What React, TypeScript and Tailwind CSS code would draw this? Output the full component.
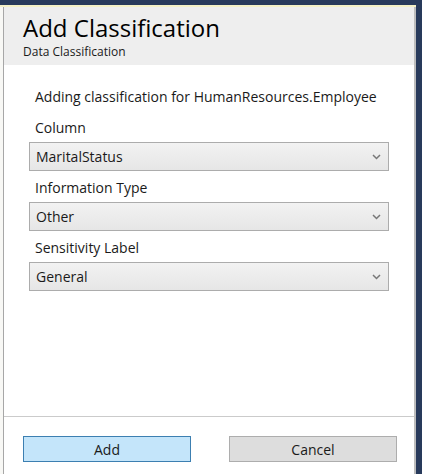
import React from "react";

const FONT = { fontFamily: '"Open Sans", "Noto Sans", sans-serif' };

function Chevron() {
  return (
    <svg width="9" height="6" viewBox="0 0 9 6" className="shrink-0">
      <path d="M1 1 L4.5 4.5 L8 1" fill="none" stroke="#777777" strokeWidth="1.5" />
    </svg>
  );
}

function Select({ value }: { value: string }) {
  return (
    <div className="flex h-[29px] items-center justify-between border border-[#acacac] bg-gradient-to-b from-[#f2f2f2] to-[#e6e6e6] pl-[6px] pr-[7px]">
      <span className="text-[14px] text-[#1a1a1a]">{value}</span>
      <Chevron />
    </div>
  );
}

function Field({ label, value }: { label: string; value: string }) {
  return (
    <div className="flex flex-col">
      <div className="ml-[6px] h-[31px] pt-[7px] text-[14px] leading-[20px] text-[#1a1a1a]">{label}</div>
      <Select value={value} />
    </div>
  );
}

export default function App() {
  return (
    <div className="flex h-[474px] w-[422px] flex-col bg-[#283a5b] pr-[6px] pt-[5px]" style={FONT}>
      <div className="h-[2px] bg-[#f4f0c6]" />
      <div className="flex flex-1 bg-white">
        <div className="w-[3px] bg-[#f8f8f5]" />
        <div className="flex flex-1 flex-col border-l border-r-2 border-[#bdbdbd] border-l-[#a7a7a7]">
          <div className="h-[58px] bg-[#eeeeee] pl-[19px] pt-[5px]">
            <div className="text-[24px] leading-[32px] text-black">Add Classification</div>
            <div className="text-[12px] leading-[16px] text-[#1a1a1a]">Data Classification</div>
          </div>
          <div className="flex flex-1 flex-col px-[25px] pt-[15px]">
            <div className="ml-[6px] h-[31px] pt-[7px] text-[14px] leading-[20px] text-[#1a1a1a]">
              Adding classification for HumanResources.Employee
            </div>
            <div className="flex flex-col">
              <Field label="Column" value="MaritalStatus" />
              <Field label="Information Type" value="Other" />
              <Field label="Sensitivity Label" value="General" />
            </div>
          </div>
          <div className="flex h-[58px] items-start gap-[38px] border-t border-[#cbcbcb] pl-[19px] pt-[19px]">
            <button className="h-[26px] w-[168px] border border-[#3c7fb1] bg-[#c4e5fa] text-[14px] text-[#1a1a1a]">
              Add
            </button>
            <button className="h-[26px] w-[168px] border border-[#adadad] bg-[#dddddd] text-[14px] text-[#1a1a1a]">
              Cancel
            </button>
          </div>
        </div>
      </div>
    </div>
  );
}
